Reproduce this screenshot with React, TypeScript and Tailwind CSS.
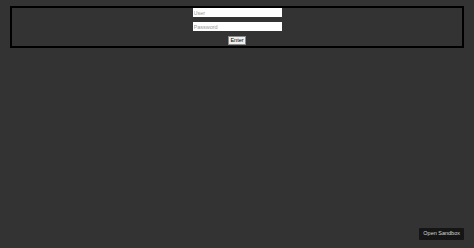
import React, { useState } from 'react';

const App = () => {
  const [user, setUser] = useState('');
  const [password, setPassword] = useState('');

  return (
    <div className="relative w-full h-[248px] bg-[#333333] overflow-hidden" style={{ fontFamily: '"Liberation Sans", Arial, sans-serif' }}>
      {/* Login box */}
      <div className="mx-[10px] mt-[6px] border-2 border-black flex flex-col items-center pb-[1px]">
        <input
          value={user}
          onChange={(e) => setUser(e.target.value)}
          placeholder="User"
          className="w-[89px] h-[9px] bg-white text-[5.5px] leading-none px-[1px] text-black placeholder:text-[#9a9a9a] outline-none"
        />
        <input
          type="password"
          value={password}
          onChange={(e) => setPassword(e.target.value)}
          placeholder="Password"
          className="mt-[5px] w-[89px] h-[9px] bg-white text-[5.5px] leading-none px-[1px] text-black placeholder:text-[#9a9a9a] outline-none"
        />
        <button className="mt-[5px] h-[9px] w-[18px] bg-[#efefef] border border-[#8a8a8a] text-[5.5px] leading-none text-black flex items-center justify-center">
          Enter
        </button>
      </div>

      {/* Sandbox button */}
      <button className="absolute right-[10px] bottom-[8px] h-[12px] px-[4px] bg-[#151515] rounded-[1px] text-[5.5px] leading-none text-[#d8d8d8] flex items-center">
        Open Sandbox
      </button>
    </div>
  );
};

export default App;
